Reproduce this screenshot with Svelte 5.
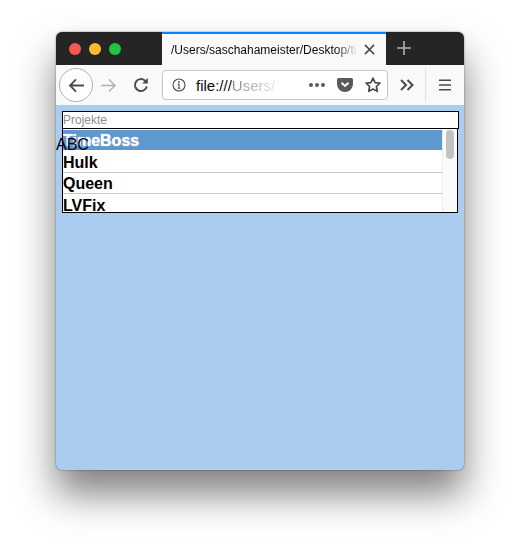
<script>
	const projects = ['TimeBoss', 'Hulk', 'Queen', 'LVFix'];
</script>

<div class="page">
	<div class="window">
		<div class="tabbar">
			<div class="lights">
				<span class="light red"></span>
				<span class="light yellow"></span>
				<span class="light green"></span>
			</div>
			<div class="tab">
				<span class="tab-title">/Users/saschahameister/Desktop/tin</span>
				<svg class="tab-close" viewBox="0 0 12 12" fill="none" stroke="#4a4a4f" stroke-width="1.7">
					<path d="M1 1l10 10M11 1L1 11" />
				</svg>
			</div>
			<svg class="new-tab" viewBox="0 0 14 14" fill="none" stroke="#b4b4b4" stroke-width="1.6">
				<path d="M7 0v14M0 7h14" />
			</svg>
		</div>

		<div class="toolbar">
			<div class="back">
				<svg viewBox="0 0 18 16" fill="none" stroke="#4a4a4f" stroke-width="1.9">
					<path d="M17 8H2M8.5 1.5L2 8l6.5 6.5" />
				</svg>
			</div>
			<svg class="forward" viewBox="0 0 18 16" fill="none" stroke="#b1b1b3" stroke-width="1.5">
				<path d="M1 8h15M9.5 1.5L16 8l-6.500 6.500" />
			</svg>
			<svg class="reload" viewBox="0 0 16 16" fill="none" stroke="#4a4a4f" stroke-width="2">
				<path d="M13.800 9.500A6 6 0 1 1 11.800 3.400L14 5.500" />
				<path d="M14.800 1v5.600H9.200z" fill="#4a4a4f" stroke="none" />
			</svg>
			<div class="urlbar">
				<svg class="info" viewBox="0 0 14 14" fill="none" stroke="#4a4a4f" stroke-width="1.100">
					<circle cx="7" cy="7" r="6" />
					<path d="M7 6v4.200M5.800 10.300h2.400M5.800 6.100H7" />
					<circle cx="7" cy="3.900" r="0.900" fill="#4a4a4f" stroke="none" />
				</svg>
				<span class="url">file:///<span class="url-rest">Users/</span></span>
				<svg class="dots" viewBox="0 0 16 4" fill="#5a5a5e">
					<circle cx="2" cy="2" r="2" />
					<circle cx="8" cy="2" r="2" />
					<circle cx="14" cy="2" r="2" />
				</svg>
				<svg class="pocket" viewBox="0 0 16 14">
					<path d="M1.500 0h13A1.500 1.500 0 0 1 16 1.500V6A8 8 0 0 1 0 6V1.500A1.500 1.500 0 0 1 1.500 0z" fill="#5a5a5e" />
					<path d="M4.500 4.800L8 8l3.500-3.200" fill="none" stroke="#fff" stroke-width="2" />
				</svg>
				<svg class="star" viewBox="0 0 16 16" fill="none" stroke="#4a4a4f" stroke-width="1.700" stroke-linejoin="round">
					<path d="M8 1.200l2.100 4.400 4.800.6-3.500 3.300.9 4.800L8 12l-4.300 2.300.9-4.800L1.100 6.200l4.800-.6z" />
				</svg>
			</div>
			<svg class="overflow" viewBox="0 0 14 12" fill="none" stroke="#4a4a4f" stroke-width="2">
				<path d="M1 1l5 5-5 5M7.500 1l5 5-5 5" />
			</svg>
			<div class="divider"></div>
			<svg class="menu" viewBox="0 0 12 12" fill="none" stroke="#4a4a4f" stroke-width="1.600">
				<path d="M0 1.200h12M0 6h12M0 10.800h12" />
			</svg>
		</div>

		<div class="content">
			<input class="search" type="text" placeholder="Projekte" />
			<div class="list">
				<ul class="rows">
					{#each projects as project, i}
						<li class="row" class:selected={i === 0}>{project}</li>
					{/each}
				</ul>
				<div class="scrollbar"><div class="thumb"></div></div>
			</div>
			<span class="abc">ABC</span>
		</div>
	</div>
</div>

<style>
	:global(body) {
		background: #fff;
		font-family: 'Liberation Sans', Arial, sans-serif;
	}

	.page {
		height: 550px;
		box-sizing: border-box;
		padding: 32px 56px 80px;
	}

	.window {
		height: 438px;
		border-radius: 6px;
		overflow: hidden;
		display: flex;
		flex-direction: column;
		background: #a9ccf0;
		box-shadow:
			0 24px 38px rgba(0, 0, 0, 0.5),
			0 0 2px rgba(0, 0, 0, 0.5);
	}

	.tabbar {
		height: 33px;
		flex: none;
		display: flex;
		align-items: stretch;
		background: #252525;
	}

	.lights {
		width: 106px;
		display: flex;
		align-items: center;
		gap: 8px;
		padding-left: 13px;
		box-sizing: border-box;
	}

	.light {
		width: 12px;
		height: 12px;
		border-radius: 50%;
	}

	.red {
		background: #fc5753;
	}

	.yellow {
		background: #fdbc2e;
	}

	.green {
		background: #1ec73f;
	}

	.tab {
		width: 224px;
		box-sizing: border-box;
		border-top: 2px solid #0a84ff;
		background: #f9f9fa;
		display: flex;
		align-items: center;
		padding: 0 11px 0 9px;
	}

	.tab-title {
		flex: 1;
		overflow: hidden;
		white-space: nowrap;
		font-size: 12px;
		color: #0c0c0d;
		-webkit-mask-image: linear-gradient(to right, #000 88%, transparent);
		mask-image: linear-gradient(to right, #000 88%, transparent);
	}

	.tab-close {
		width: 11px;
		height: 11px;
		margin-left: 6px;
	}

	.new-tab {
		width: 14px;
		height: 14px;
		margin: 9px 0 0 11px;
	}

	.toolbar {
		height: 40px;
		flex: none;
		display: flex;
		align-items: center;
		background: #f9f9fa;
		box-sizing: border-box;
		padding-left: 3px;
	}

	.back {
		width: 32px;
		height: 32px;
		flex: none;
		border: 1px solid #b1b1b3;
		border-radius: 50%;
		background: #fff;
		display: flex;
		align-items: center;
		justify-content: center;
	}

	.back svg {
		width: 17px;
		height: 15px;
	}

	.forward {
		width: 17px;
		height: 15px;
		flex: none;
		margin-left: 7px;
	}

	.reload {
		width: 16px;
		height: 16px;
		flex: none;
		margin-left: 16px;
	}

	.urlbar {
		width: 226px;
		height: 30px;
		flex: none;
		box-sizing: border-box;
		margin-left: 13px;
		border: 1px solid #c5c5c7;
		border-radius: 4px;
		background: #fff;
		display: flex;
		align-items: center;
		padding-left: 9px;
	}

	.info {
		width: 14px;
		height: 14px;
		flex: none;
	}

	.url {
		width: 104px;
		flex: none;
		margin-left: 10px;
		font-size: 15px;
		color: #0c0c0d;
		white-space: nowrap;
		overflow: hidden;
	}

	.url-rest {
		display: inline-block;
		color: #8a8a8c;
		-webkit-mask-image: linear-gradient(to right, #000, rgba(0, 0, 0, 0.2));
		mask-image: linear-gradient(to right, #000, rgba(0, 0, 0, 0.2));
	}

	.dots {
		width: 16px;
		height: 4px;
		flex: none;
		margin-left: 9px;
	}

	.pocket {
		width: 16px;
		height: 14px;
		flex: none;
		margin-left: 12px;
	}

	.star {
		width: 16px;
		height: 16px;
		flex: none;
		margin-left: 12px;
	}

	.overflow {
		width: 14px;
		height: 12px;
		flex: none;
		margin-left: 12px;
	}

	.divider {
		width: 1px;
		height: 34px;
		flex: none;
		margin-left: 11px;
		background: #e1e1e2;
	}

	.menu {
		width: 12px;
		height: 12px;
		flex: none;
		margin-left: 13px;
	}

	.content {
		flex: 1;
		position: relative;
		padding: 6px 5px 0 6px;
	}

	.search {
		display: block;
		width: 397px;
		height: 18px;
		box-sizing: border-box;
		margin: 0;
		padding: 0;
		border: 1px solid #000;
		background: #fff;
		font-family: 'Liberation Sans', Arial, sans-serif;
		font-size: 12px;
		outline: none;
	}

	.search::placeholder {
		color: #8e8e8e;
		opacity: 1;
	}

	.list {
		width: 396px;
		height: 84px;
		box-sizing: border-box;
		border: 1px solid #000;
		border-top: none;
		background: #fff;
		display: flex;
		overflow: hidden;
	}

	.rows {
		flex: 1;
		margin: 0;
		padding: 1px 0 0;
		list-style: none;
		overflow: hidden;
	}

	.row {
		height: 21px;
		box-sizing: border-box;
		border-bottom: 1px solid #c8c8c8;
		font-size: 16px;
		font-weight: bold;
		line-height: 21px;
		color: #000;
	}

	.row:last-child {
		line-height: 23px;
	}

	.row.selected {
		height: 22px;
		background: #5f97cf;
		background-clip: padding-box;
		color: #fff;
		border-bottom: 2px solid #fff;
		text-shadow: 0 0 1px #fff;
	}

	.scrollbar {
		width: 15px;
		flex: none;
		box-sizing: border-box;
		border-left: 1px solid #ececec;
		background: #fafafa;
		padding: 1px 3px 0 3px;
	}

	.thumb {
		width: 8px;
		height: 29px;
		border-radius: 4px;
		background: #c2c2c2;
	}

	.abc {
		position: absolute;
		left: 0;
		top: 31px;
		font-size: 16px;
		line-height: 18px;
		color: #000;
	}
</style>
